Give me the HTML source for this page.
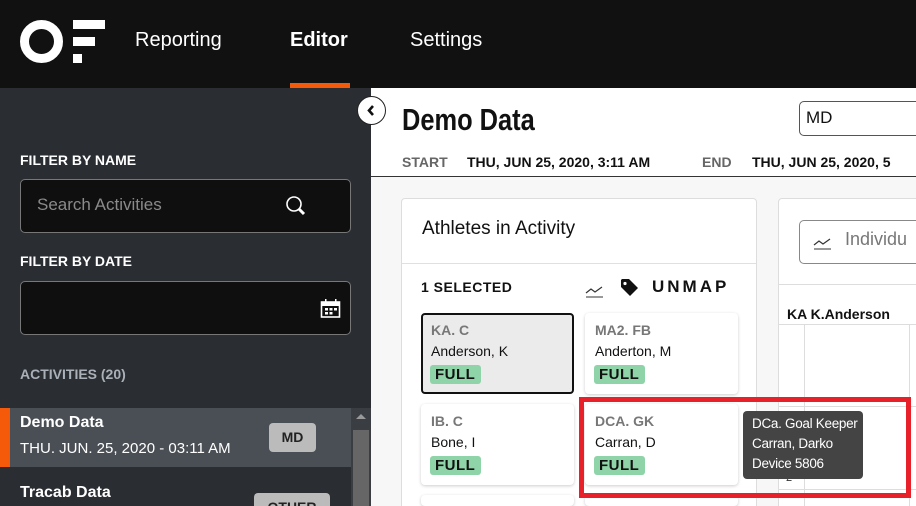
<!DOCTYPE html>
<html style="width:916px;height:506px;overflow:hidden"><head><meta charset="utf-8"><style>
*{margin:0;padding:0;box-sizing:border-box}
body{width:916px;height:506px;overflow:hidden;position:relative;font-family:"Liberation Sans",sans-serif;background:#f7f7f7}
.a{position:absolute;white-space:nowrap}
.hdr{left:0;top:0;width:916px;height:88px;background:#111}
.nav{color:#fff;font-size:20px;top:29px}
.side{left:0;top:88px;width:371px;height:418px;background:#2a2e33}
.lbl{color:#fff;font-weight:bold;font-size:14px;left:20px}
.inp{left:20px;width:331px;height:54px;background:#0f0f0f;border:1px solid #777;border-radius:5px}
.card{width:153px;height:81px;background:#fff;border-radius:4px;box-shadow:0 1px 3px rgba(0,0,0,.2)}
.card .c{position:absolute;left:10px;top:9px;font-size:14px;font-weight:bold;color:#777}
.card .n{position:absolute;left:10px;top:30px;font-size:14px;color:#111}
.card .f{position:absolute;left:9px;top:52px;width:51px;height:19px;background:#8fd4a8;border-radius:3px;font-weight:bold;font-size:15px;color:#111;padding-left:5px;line-height:19px;letter-spacing:.5px}
</style></head><body>
<div class="a hdr"></div>
<svg class="a" style="left:20px;top:19px" width="86" height="45" viewBox="0 0 86 45"><circle cx="21.5" cy="22.5" r="17" fill="none" stroke="#fff" stroke-width="9"/><rect x="53" y="1" width="32" height="9" fill="#fff"/><rect x="53" y="18" width="22" height="9" fill="#fff"/><rect x="53" y="35" width="9" height="9" fill="#fff"/></svg>
<div class="a nav" style="left:135px">Reporting</div>
<div class="a nav" style="left:290px;font-weight:bold">Editor</div>
<div class="a nav" style="left:410px">Settings</div>
<div class="a" style="left:290px;top:83px;width:60px;height:5px;background:#f55a0a"></div>

<div class="a side"></div>
<div class="a lbl" style="top:152px">FILTER BY NAME</div>
<div class="a inp" style="top:179px"></div>
<div class="a" style="left:37px;top:195px;color:#8a8a8a;font-size:17px">Search Activities</div>
<svg class="a" style="left:285px;top:195px" width="22" height="22"><circle cx="9" cy="9" r="7" fill="none" stroke="#fff" stroke-width="1.6"/><path d="M14 14l5 5" stroke="#fff" stroke-width="3"/></svg>
<div class="a lbl" style="top:253px">FILTER BY DATE</div>
<div class="a inp" style="top:281px"></div>
<svg class="a" style="left:320px;top:298px" width="22" height="22"><rect x="1.5" y="4" width="18" height="15" fill="none" stroke="#fff" stroke-width="1.6"/><rect x="1.5" y="4" width="18" height="4" fill="#fff"/><rect x="5" y="1" width="1.5" height="3" fill="#fff"/><rect x="15" y="1" width="1.5" height="3" fill="#fff"/><rect x="5" y="10" width="3" height="2.5" fill="#fff"/><rect x="9.5" y="10" width="3" height="2.5" fill="#fff"/><rect x="14" y="10" width="3" height="2.5" fill="#fff"/><rect x="5" y="14" width="3" height="2.5" fill="#fff"/><rect x="9.5" y="14" width="3" height="2.5" fill="#fff"/></svg>
<div class="a" style="left:20px;top:366px;color:#aab0b8;font-weight:bold;font-size:14px">ACTIVITIES (20)</div>
<div class="a" style="left:0;top:408px;width:351px;height:59px;background:#4a4f55"></div>
<div class="a" style="left:0;top:408px;width:10px;height:59px;background:#f55a0a"></div>
<div class="a" style="left:20px;top:414px;color:#fff;font-weight:bold;font-size:16px">Demo Data</div>
<div class="a" style="left:20px;top:440px;color:#fff;font-size:15px">THU. JUN. 25, 2020 - 03:11 AM</div>
<div class="a" style="left:269px;top:423px;width:47px;height:29px;background:#bbb;border-radius:4px;font-weight:bold;font-size:14px;color:#222;text-align:center;line-height:29px">MD</div>
<div class="a" style="left:20px;top:484px;color:#fff;font-weight:bold;font-size:16px">Tracab Data</div>
<div class="a" style="left:254px;top:493px;width:76px;height:29px;background:#bbb;border-radius:4px;font-weight:bold;font-size:14px;color:#222;text-align:center;line-height:29px">OTHER</div>
<div class="a" style="left:351px;top:408px;width:20px;height:98px;background:#3a3e43"></div>
<div class="a" style="left:353px;top:430px;width:16px;height:76px;background:#666"></div>
<div class="a" style="left:356px;top:414px;width:0;height:0;border-left:5px solid transparent;border-right:5px solid transparent;border-bottom:5px solid #999"></div>

<div class="a" style="left:371px;top:88px;width:545px;height:89px;background:#fff;border-bottom:1px solid #333"></div>
<div class="a" style="left:357px;top:96px;width:29px;height:29px;border-radius:50%;background:#fff;border:1px solid #222"></div>
<svg class="a" style="left:364px;top:103px" width="15" height="15"><path d="M9 3L5 7.5 9 12" fill="none" stroke="#111" stroke-width="2.6"/></svg>
<div class="a" style="left:402px;top:102px;font-family:'Liberation Sans Narrow','Liberation Sans',sans-serif;font-weight:bold;font-size:31px;color:#111;transform:scaleX(.82);transform-origin:left">Demo Data</div>
<div class="a" style="left:799px;top:101px;width:130px;height:35px;border:1px solid #555;border-radius:5px;background:#fff;font-size:17px;padding:6px 0 0 6px;color:#111">MD</div>
<div class="a" style="left:402px;top:154px;font-size:14px;font-weight:bold;color:#666">START</div>
<div class="a" style="left:467px;top:154px;font-size:14px;font-weight:bold;color:#111">THU, JUN 25, 2020, 3:11 AM</div>
<div class="a" style="left:702px;top:154px;font-size:14px;font-weight:bold;color:#666">END</div>
<div class="a" style="left:752px;top:154px;font-size:14px;font-weight:bold;color:#111">THU, JUN 25, 2020, 5</div>

<div class="a" style="left:401px;top:198px;width:356px;height:320px;background:#fff;border:1px solid #ddd;border-radius:4px"></div>
<div class="a" style="left:402px;top:263px;width:354px;height:1px;background:#e0e0e0"></div>
<div class="a" style="left:422px;top:218px;font-size:19px;color:#111">Athletes in Activity</div>
<div class="a" style="left:421px;top:279px;font-size:14px;font-weight:bold;color:#111;letter-spacing:.5px">1 SELECTED</div>
<svg class="a" style="left:585px;top:282px" width="20" height="16"><path d="M1 11l5-4 4 3 7-5" fill="none" stroke="#333" stroke-width="1.2"/><path d="M1 15h17" stroke="#333" stroke-width="1"/></svg>
<svg class="a" style="left:620px;top:278px" width="20" height="20"><path d="M1 2v7l9 9 8-8-9-9H2z" fill="#111"/><circle cx="5" cy="5.5" r="1.6" fill="#fff"/></svg>
<div class="a" style="left:652px;top:277px;font-size:17px;font-weight:bold;color:#111;letter-spacing:3px">UNMAP</div>

<div class="a card" style="left:421px;top:313px;background:#ebebeb;border:2px solid #111;box-shadow:none"><div class="c" style="left:8px;top:7px">KA. C</div><div class="n" style="left:8px;top:28px">Anderson, K</div><div class="f" style="left:7px;top:50px">FULL</div></div>
<div class="a card" style="left:585px;top:313px"><div class="c">MA2. FB</div><div class="n">Anderton, M</div><div class="f">FULL</div></div>
<div class="a card" style="left:421px;top:404px"><div class="c">IB. C</div><div class="n">Bone, I</div><div class="f">FULL</div></div>
<div class="a card" style="left:585px;top:404px"><div class="c">DCA. GK</div><div class="n">Carran, D</div><div class="f">FULL</div></div>
<div class="a card" style="left:421px;top:495px;height:11px"></div>
<div class="a card" style="left:585px;top:495px;height:11px"></div>

<div class="a" style="left:778px;top:198px;width:150px;height:320px;background:#fff;border:1px solid #ddd;border-radius:4px"></div>
<div class="a" style="left:799px;top:220px;width:130px;height:44px;border:1px solid #888;border-radius:5px"></div>
<svg class="a" style="left:813px;top:234px" width="20" height="16"><path d="M1 11l5-4 4 3 7-5" fill="none" stroke="#333" stroke-width="1.2"/><path d="M1 15h17" stroke="#333" stroke-width="1"/></svg>
<div class="a" style="left:845px;top:229px;font-size:18px;color:#777">Individu</div>
<div class="a" style="left:779px;top:284px;width:137px;height:1px;background:#ddd"></div>
<div class="a" style="left:787px;top:306px;font-size:14px;font-weight:bold;color:#111">KA K.Anderson</div>
<div class="a" style="left:779px;top:324px;width:137px;height:1px;background:#ddd"></div>
<div class="a" style="left:779px;top:406px;width:137px;height:1px;background:#ddd"></div>
<div class="a" style="left:779px;top:489px;width:137px;height:1px;background:#ddd"></div>
<div class="a" style="left:804px;top:324px;width:1px;height:182px;background:#ddd"></div>
<div class="a" style="left:909px;top:324px;width:1px;height:182px;background:#ddd"></div>
<div class="a" style="left:786px;top:472px;font-size:11px;color:#333">2</div>

<div class="a" style="left:579px;top:397px;width:332px;height:101px;border:5px solid #e8202a"></div>
<div class="a" style="left:743px;top:411px;width:120px;height:68px;background:#444;border-radius:4px;color:#fff;font-size:13.5px;line-height:20px;padding:3px 0 0 9px;letter-spacing:-.3px">DCa. Goal Keeper<br>Carran, Darko<br>Device 5806</div>
</body></html>
